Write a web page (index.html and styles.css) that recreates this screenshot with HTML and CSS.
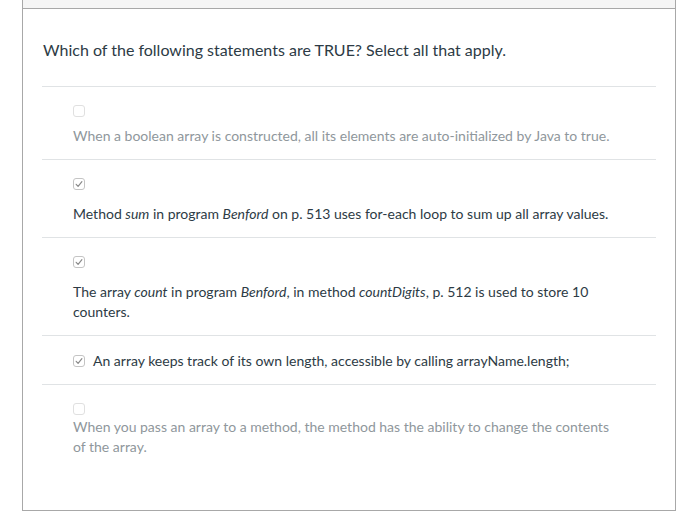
FILE: index.html
```html
<!DOCTYPE html>
<html>
<head>
<meta charset="utf-8">
<link rel="stylesheet" href="styles.css">
</head>
<body>
<div class="quiz">
  <div class="quiz-header"></div>
  <div class="quiz-body">
    <div class="question">Which of the following statements are TRUE? Select all that apply.</div>
    <div class="answers">
      <div class="answer answer-off answer-first">
        <span class="cb"></span>
        <div class="answer-text">When a boolean array is constructed, all its elements are auto-initialized by Java to true.</div>
      </div>
      <div class="answer">
        <span class="cb cb-on"><svg viewBox="0 0 12 12" width="12" height="12"><path d="M3.2 6.3 L5.1 8.3 L8.9 3.6" fill="none" stroke="#8a8a8a" stroke-width="1.2" stroke-linecap="round" stroke-linejoin="round"/></svg></span>
        <div class="answer-text">Method <em>sum</em> in program <em>Benford</em> on p. 513 uses for-each loop to sum up all array values.</div>
      </div>
      <div class="answer">
        <span class="cb cb-on"><svg viewBox="0 0 12 12" width="12" height="12"><path d="M3.2 6.3 L5.1 8.3 L8.9 3.6" fill="none" stroke="#8a8a8a" stroke-width="1.2" stroke-linecap="round" stroke-linejoin="round"/></svg></span>
        <div class="answer-text">The array <em>count</em> in program <em>Benford</em>, in method <em>countDigits</em>, p. 512 is used to store 10 counters.</div>
      </div>
      <div class="answer answer-inline">
        <span class="cb cb-on"><svg viewBox="0 0 12 12" width="12" height="12"><path d="M3.2 6.3 L5.1 8.3 L8.9 3.6" fill="none" stroke="#8a8a8a" stroke-width="1.2" stroke-linecap="round" stroke-linejoin="round"/></svg></span>
        <div class="answer-text">An array keeps track of its own length, accessible by calling arrayName.length;</div>
      </div>
      <div class="answer answer-off answer-last">
        <span class="cb"></span>
        <div class="answer-text">When you pass an array to a method, the method has the ability to change the contents of the array.</div>
      </div>
    </div>
  </div>
</div>
</body>
</html>
```

FILE: styles.css
```css
html, body {
  margin: 0;
  padding: 0;
  background: #ffffff;
}
body {
  font-family: Lato, "Open Sans", sans-serif;
  color: #2d3b45;
}
.quiz {
  margin-left: 22px;
  width: 654px;
  height: 511px;
  box-sizing: border-box;
  border: 1px solid #a8a8a8;
  border-top: none;
}
.quiz-header {
  height: 8px;
  background: #f5f5f5;
  border-bottom: 1px solid #a8a8a8;
}
.quiz-body {
  padding: 0 19px;
}
.question {
  padding: 30px 0 25px 1px;
  font-size: 16px;
  line-height: 22px;
}
.answer {
  border-top: 1px solid #e0e3e5;
  padding: 18px 40px 13px 31px;
  display: flex;
  flex-direction: column;
  align-items: flex-start;
  gap: 14px;
}
.answer-first {
  gap: 9px;
  padding-bottom: 13px;
}
.answer-last {
  gap: 2px;
}
.answer-inline {
  flex-direction: row;
  align-items: center;
  gap: 8px;
  padding-top: 15px;
  padding-bottom: 13px;
}
.answer-text {
  font-size: 14px;
  line-height: 20px;
}
.answer-off .answer-text {
  color: #8f979c;
}
.cb {
  display: block;
  width: 12px;
  height: 12px;
  box-sizing: border-box;
  border: 1px solid #e0e0e0;
  border-radius: 3px;
  background: #fff;
  flex: none;
}
.cb-on {
  border-color: #c4c4c4;
  position: relative;
}
.cb svg {
  position: absolute;
  left: -1px;
  top: -1px;
}
```
